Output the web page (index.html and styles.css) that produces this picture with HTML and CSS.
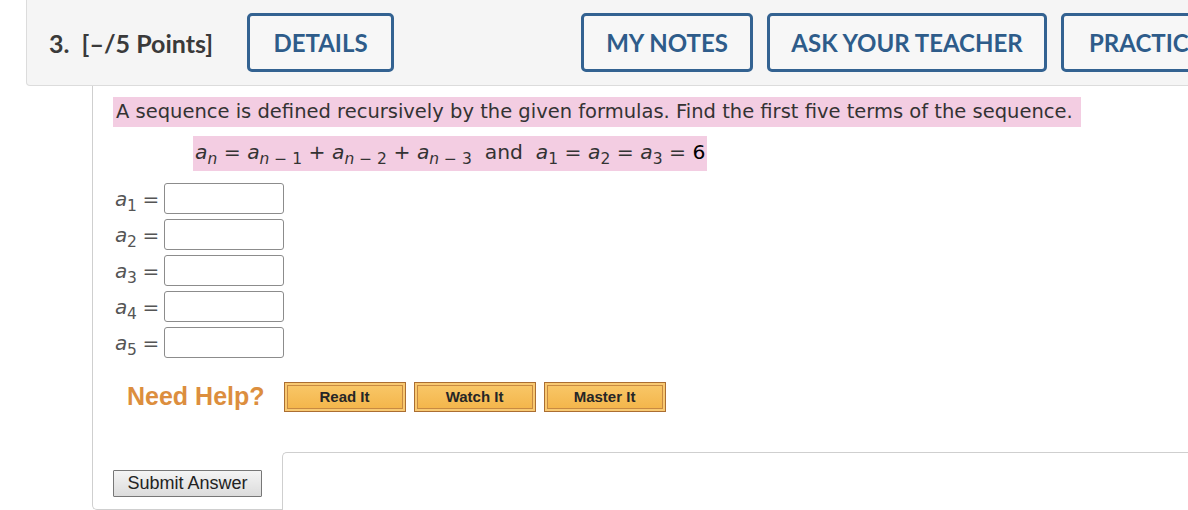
FILE: index.html
```html
<!DOCTYPE html>
<html lang="en">
<head>
<meta charset="utf-8">
<title>Question 3</title>
<link rel="stylesheet" href="styles.css">
</head>
<body>
<div class="page">
  <header class="qhead">
    <div class="qtitle">3.&nbsp;&nbsp;[–/5 Points]</div>
    <button class="hbtn details">DETAILS</button>
    <div class="hright">
      <button class="hbtn">MY NOTES</button>
      <button class="hbtn">ASK YOUR TEACHER</button>
      <button class="hbtn practice">PRACTICE ANOTHER</button>
    </div>
  </header>

  <section class="qbody">
    <div class="content">
      <p class="prompt"><span class="hl">A sequence is defined recursively by the given formulas. Find the first five terms of the sequence.</span></p>
      <div class="formula"><i>a</i><sub><i>n</i></sub> = <i>a</i><sub><i>n</i> − 1</sub> + <i>a</i><sub><i>n</i> − 2</sub> + <i>a</i><sub><i>n</i> − 3</sub>&nbsp; and&nbsp; <i>a</i><sub>1</sub> = <i>a</i><sub>2</sub> = <i>a</i><sub>3</sub> = <span class="num">6</span></div>

      <div class="answers">
        <div class="arow"><label class="alabel"><i>a</i><sub>1</sub> =</label><input class="ain" type="text"></div>
        <div class="arow"><label class="alabel"><i>a</i><sub>2</sub> =</label><input class="ain" type="text"></div>
        <div class="arow"><label class="alabel"><i>a</i><sub>3</sub> =</label><input class="ain" type="text"></div>
        <div class="arow"><label class="alabel"><i>a</i><sub>4</sub> =</label><input class="ain" type="text"></div>
        <div class="arow"><label class="alabel"><i>a</i><sub>5</sub> =</label><input class="ain" type="text"></div>
      </div>

      <div class="help">
        <span class="needhelp">Need Help?</span>
        <button class="hlp">Read It</button>
        <button class="hlp">Watch It</button>
        <button class="hlp">Master It</button>
      </div>
    </div>

    <div class="foot">
      <div class="submitcell"><button class="submit">Submit Answer</button></div>
      <div class="footright"></div>
    </div>
  </section>
</div>
</body>
</html>
```

FILE: styles.css
```css
html, body {
  margin: 0;
  padding: 0;
  background: #fff;
  overflow: hidden;
}

.page {
  width: 1188px;
  height: 510px;
  overflow: hidden;
  font-family: "DejaVu Sans", Verdana, sans-serif;
  color: #333;
}

.qhead {
  margin-left: 26px;
  width: 1300px;
  height: 86px;
  box-sizing: border-box;
  background: #f5f5f5;
  border: 1px solid #dcdcdc;
  border-top: none;
  border-bottom-left-radius: 4px;
  display: flex;
  align-items: center;
  padding-left: 22px;
}

.qtitle {
  font-family: Lato, "Open Sans", sans-serif;
  font-weight: 700;
  font-size: 25px;
  color: #3a3a3a;
  white-space: nowrap;
  width: 198px;
  flex: none;
}

.hbtn {
  font-family: Lato, "Open Sans", sans-serif;
  font-weight: 700;
  font-size: 24px;
  color: #2e5c8a;
  background: #f7f7f7;
  border: 3px solid #336291;
  border-radius: 5px;
  height: 59px;
  padding: 0;
  white-space: nowrap;
  flex: none;
}

.details {
  width: 147px;
}

.hright {
  display: flex;
  gap: 14px;
  margin-left: 187px;
}

.hright .hbtn:nth-child(1) { width: 172px; }
.hright .hbtn:nth-child(2) { width: 280px; }
.practice { width: 300px; text-align: left; padding-left: 25px; }

.qbody {
  margin-left: 92px;
}

.content {
  border-left: 1px solid #cfcfcf;
  padding: 11px 0 41px 20px;
}

.prompt {
  margin: 0;
  font-size: 19.5px;
  line-height: 30px;
}

.hl {
  display: inline-block;
  background: #f3cde2;
  padding: 0 8px 0 3px;
  color: #333;
}

.formula {
  display: inline-block;
  margin: 9px 0 0 80px;
  background: #f3cde2;
  font-size: 20.3px;
  height: 35px;
  line-height: 33px;
  padding: 0 2px 0 2px;
  color: #333;
  white-space: nowrap;
}

.formula sub,
.alabel sub {
  font-size: 15.5px;
  vertical-align: -5px;
  line-height: 0;
}

.formula .num { color: #000; }

.answers {
  display: flex;
  flex-direction: column;
  gap: 5px;
  margin-top: 12px;
}

.arow {
  display: flex;
  align-items: center;
  height: 31px;
}

.alabel {
  width: 48px;
  font-size: 20px;
  color: #555;
  white-space: nowrap;
  text-align: left;
  padding-left: 2px;
  letter-spacing: -0.3px;
}

.ain {
  width: 120px;
  height: 31px;
  box-sizing: border-box;
  border: 1px solid #8c8c8c;
  border-radius: 3px;
  margin-left: 1px;
  background: #fff;
}

.help {
  display: flex;
  align-items: center;
  margin-top: 24px;
  height: 29px;
}

.needhelp {
  font-family: "Liberation Sans", Arial, sans-serif;
  font-weight: 700;
  font-size: 25px;
  color: #dc8e3e;
  margin-left: 14px;
  margin-right: 19px;
}

.hlp {
  font-family: "Liberation Sans", Arial, sans-serif;
  font-weight: 700;
  font-size: 15px;
  color: #262626;
  width: 122px;
  height: 30px;
  margin-right: 8px;
  background: linear-gradient(#f9c86a, #f3b448);
  border: 1px solid #ab6e32;
  box-shadow: inset 0 0 0 2px #f8c972, inset 0 0 0 3px #c88a42;
  padding: 0;
}

.foot {
  display: flex;
  height: 58px;
}

.submitcell {
  width: 190px;
  border-left: 1px solid #cfcfcf;
  border-bottom: 1px solid #cfcfcf;
  border-bottom-left-radius: 5px;
  padding: 18px 0 0 20px;
  box-sizing: border-box;
}

.submit {
  font-family: "Liberation Sans", Arial, sans-serif;
  font-size: 18px;
  color: #222;
  width: 149px;
  height: 27px;
  padding: 0;
  background: linear-gradient(#f4f4f4, #dcdcdc);
  border: 1px solid #777;
  border-radius: 1px;
}

.footright {
  flex: 1;
  border-top: 1px solid #cfcfcf;
  border-left: 1px solid #cfcfcf;
  border-top-left-radius: 5px;
}
```
